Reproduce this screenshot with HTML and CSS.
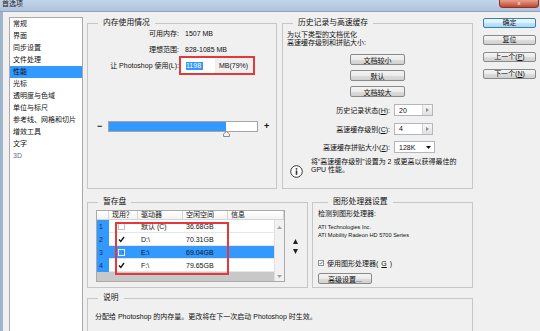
FILE: index.html
```html
<!DOCTYPE html>
<html lang="zh-CN">
<head>
    <meta charset="UTF-8">
    <meta name="viewport" content="width=device-width, initial-scale=1.0">
    <title>首选项</title>
    <link rel="stylesheet" href="styles.css">
</head>
<body>
    <div class="titlebar">
        <span class="title">首选项</span>
        <span class="close">x</span>
    </div>
    <div class="dialog">
        <ul class="nav">
            <li>常规</li>
            <li>界面</li>
            <li>同步设置</li>
            <li>文件处理</li>
            <li class="sel">性能</li>
            <li>光标</li>
            <li>透明度与色域</li>
            <li>单位与标尺</li>
            <li>参考线、网格和切片</li>
            <li>增效工具</li>
            <li>文字</li>
            <li class="dim">3D</li>
        </ul>

        <main class="panes">
            <div class="row row1">
                <fieldset class="grp mem">
                    <legend>内存使用情况</legend>
                    <div class="kv">
                        <span class="k">可用内存:</span><span class="v">1507 MB</span>
                        <span class="k">理想范围:</span><span class="v">828-1085 MB</span>
                        <span class="k">让 Photoshop 使用(L):</span>
                        <span class="mark">
                            <span class="field"><span class="hl">1198</span></span>
                            <span>MB(79%)</span>
                        </span>
                    </div>
                    <div class="slider">
                        <span class="pm">−</span>
                        <div class="bar">
                            <div class="fill" style="width:79%"></div>
                            <svg class="thumb" width="7" height="6" viewBox="0 0 7 6"><polygon points="3.5,0.5 6.5,3 6.5,5.5 0.5,5.5 0.5,3" fill="#f2f2f2" stroke="#8c8c8c"/></svg>
                        </div>
                        <span class="pm">+</span>
                    </div>
                </fieldset>

                <fieldset class="grp hist">
                    <legend>历史记录与高速缓存</legend>
                    <p class="note">为以下类型的文档优化<br>高速缓存级别和拼贴大小:</p>
                    <div class="presets">
                        <button>文档较小</button>
                        <button>默认</button>
                        <button>文档较大</button>
                    </div>
                    <div class="opts">
                        <span class="k">历史记录状态(<u>H</u>):</span>
                        <span class="spin"><span class="num">20</span><span class="arr"><svg width="3" height="4" viewBox="0 0 3 4"><polygon points="0,0 3,2 0,4" fill="#8a8a8a"/></svg></span></span>
                        <span class="k">高速缓存级别(<u>C</u>):</span>
                        <span class="spin"><span class="num">4</span><span class="arr"><svg width="3" height="4" viewBox="0 0 3 4"><polygon points="0,0 3,2 0,4" fill="#8a8a8a"/></svg></span></span>
                        <span class="k">高速缓存拼贴大小(<u>Z</u>):</span>
                        <span class="drop"><span>128K</span><svg width="5" height="3" viewBox="0 0 5 3"><polygon points="0,0 5,0 2.5,3" fill="#111"/></svg></span>
                    </div>
                    <div class="info">
                        <svg class="ico" width="13" height="13" viewBox="0 0 13 13">
                            <circle cx="6.5" cy="6.5" r="5.8" fill="#fff" stroke="#333" stroke-width="1"/>
                            <circle cx="6.5" cy="3.8" r="0.9" fill="#333"/>
                            <rect x="5.7" y="5.4" width="1.6" height="4.4" fill="#333"/>
                        </svg>
                        <p>将“高速缓存级别”设置为 2 或更高以获得最佳的<br>GPU 性能。</p>
                    </div>
                </fieldset>
            </div>

            <div class="row row2">
                <fieldset class="grp scratch">
                    <legend>暂存盘</legend>
                    <div class="disks">
                        <div class="disk">
                            <div class="cols thead">
                                <span></span><span>现用？</span><span>驱动器</span><span>空闲空间</span><span>信息</span>
                            </div>
                            <div class="tbody">
                                <div class="rows">
                                    <div class="cols tr">
                                        <span class="idx">1</span>
                                        <span class="chk"><span class="box"></span></span>
                                        <span>默认 (C)</span><span>36.68GB</span><span></span>
                                    </div>
                                    <div class="cols tr">
                                        <span class="idx">2</span>
                                        <span class="chk"><svg width="7" height="7" viewBox="0 0 7 7"><polyline points="1,3.5 2.8,5.5 6,1" fill="none" stroke="#111" stroke-width="1.3"/></svg></span>
                                        <span>D:\</span><span>70.31GB</span><span></span>
                                    </div>
                                    <div class="cols tr sel">
                                        <span class="idx">3</span>
                                        <span class="chk"><span class="box on"><svg width="5" height="5" viewBox="0 0 7 7"><polyline points="1,3.5 2.8,5.5 6,1" fill="none" stroke="#111" stroke-width="1.4"/></svg></span></span>
                                        <span>E:\</span><span>69.04GB</span><span></span>
                                    </div>
                                    <div class="cols tr">
                                        <span class="idx">4</span>
                                        <span class="chk"><svg width="7" height="7" viewBox="0 0 7 7"><polyline points="1,3.5 2.8,5.5 6,1" fill="none" stroke="#111" stroke-width="1.3"/></svg></span>
                                        <span>F:\</span><span>79.65GB</span><span></span>
                                    </div>
                                </div>
                                <div class="vscroll">
                                    <svg width="5" height="3" viewBox="0 0 5 3"><polygon points="0,3 5,3 2.5,0" fill="#a0a0a0"/></svg>
                                    <svg width="5" height="3" viewBox="0 0 5 3"><polygon points="0,0 5,0 2.5,3" fill="#a0a0a0"/></svg>
                                </div>
                            </div>
                            <div class="redmark"></div>
                        </div>
                        <div class="order">
                            <svg width="5" height="5" viewBox="0 0 5 5"><polygon points="0,5 5,5 2.5,0" fill="#222"/></svg>
                            <svg width="5" height="5" viewBox="0 0 5 5"><polygon points="0,0 5,0 2.5,5" fill="#222"/></svg>
                        </div>
                    </div>
                </fieldset>

                <fieldset class="grp gpu">
                    <legend>图形处理器设置</legend>
                    <p class="detect">检测到图形处理器:</p>
                    <p class="card">ATI Technologies Inc.<br>ATI Mobility Radeon HD 5700 Series</p>
                    <label class="use">
                        <span class="tick"><svg width="6" height="6" viewBox="0 0 6 6"><polyline points="1,3 2.4,4.6 5,1" fill="none" stroke="#2a5bd7" stroke-width="1.2"/></svg></span>
                        使用图形处理器(<u>G</u>)
                    </label>
                    <button class="adv">高级设置...</button>
                </fieldset>
            </div>

            <fieldset class="grp desc">
                <legend>说明</legend>
                <p>分配给 Photoshop 的内存量。更改将在下一次启动 Photoshop 时生效。</p>
            </fieldset>
        </main>

        <div class="actions">
            <button class="ok">确定</button>
            <button>复位</button>
            <button>上一个(<u>P</u>)</button>
            <button>下一个(<u>N</u>)</button>
        </div>
    </div>
</body>
</html>
```

FILE: styles.css
```css
*{
    box-sizing: border-box;
    margin: 0;
    padding: 0;
}
body{
    width: 540px;
    height: 331px;
    overflow: hidden;
    background-color: #f0f0f0;
    font-family: "Liberation Sans", "Noto Sans CJK SC", sans-serif;
    font-size: 7px;
    color: #111;
}
button{
    display: block;
    font: inherit;
    color: #111;
    border: 1px solid #8a8a8a;
    border-radius: 2px;
    background: linear-gradient(#f4f4f4, #ebebeb 50%, #dddddd 51%, #d0d0d0);
}

/* title bar */
.titlebar{
    height: 12px;
    display: flex;
    justify-content: space-between;
    align-items: flex-start;
    background: linear-gradient(#c4d6eb, #adc3dc);
    border-bottom: 1px solid #8fa4bd;
}
.title{
    line-height: 8px;
    padding-left: 2px;
    font-size: 7px;
    color: #222;
}
.close{
    width: 40px;
    height: 8px;
    margin-right: 1px;
    border: 1px solid #8a3325;
    border-top: none;
    border-radius: 0 0 4px 4px;
    background: linear-gradient(#e6a08d, #c5462f);
    color: #fff;
    font-size: 6px;
    line-height: 7px;
    text-align: center;
}

.dialog{
    display: flex;
    align-items: flex-start;
    height: 319px;
    overflow: hidden;
    padding: 5px 0 0 6px;
    border-left: 3px solid #9fb3cb;
}

/* left list */
.nav{
    list-style: none;
    flex-shrink: 0;
    width: 74px;
    height: 330px;
    background-color: #fff;
    border: 1px solid #a9a9a9;
}
.nav li{
    height: 12px;
    line-height: 12px;
    padding-left: 3px;
    white-space: nowrap;
}
.nav li.sel{
    background-color: #3399ff;
}
.nav li.dim{
    color: #5d6c8c;
}

/* panes */
.panes{
    width: 386px;
    flex-shrink: 0;
    margin: 1px 0 0 4px;
    display: flex;
    flex-direction: column;
}
.row{
    display: flex;
    justify-content: space-between;
    flex-shrink: 0;
}
.row1{
    height: 171px;
}
.row2{
    height: 91px;
    margin-top: 8px;
}
.grp{
    border: 1px solid #c6c6c6;
    min-width: 0;
    flex-shrink: 0;
}
.grp legend{
    font-size: 7.8px;
    line-height: 10px;
    padding: 0 5px;
    margin-left: 10px;
}
.k{
    text-align: right;
    white-space: nowrap;
}

/* memory */
.mem{
    width: 190px;
}
.kv{
    display: grid;
    grid-template-columns: 91px auto;
    grid-auto-rows: 11px;
    column-gap: 4px;
    row-gap: 5px;
    align-items: center;
    line-height: 11px;
}
.v{
    padding-left: 2px;
}
.mark{
    display: flex;
    align-items: center;
    gap: 4px;
    width: 76px;
    height: 19px;
    margin: -4px 0 -4px -4px;
    border: 2px solid #e5383b;
}
.field{
    display: flex;
    align-items: center;
    width: 34px;
    height: 15px;
    padding-left: 5px;
    background-color: #fff;
}
.hl{
    background-color: #3399ff;
    color: #fff;
    line-height: 8px;
    padding-right: 2px;
}
.slider{
    display: flex;
    align-items: center;
    gap: 6px;
    height: 11px;
    margin-top: 50px;
    padding-left: 9px;
}
.pm{
    width: 5px;
    font-size: 9px;
    font-weight: bold;
    line-height: 11px;
    text-align: center;
}
.bar{
    position: relative;
    width: 150px;
    height: 11px;
    border: 1px solid #a4a4a4;
    background-color: #fff;
}
.fill{
    height: 100%;
    background-color: #3399ff;
}
.thumb{
    position: absolute;
    left: 79%;
    top: 100%;
    margin-left: -3px;
}

/* history */
.hist{
    width: 191px;
}
.note{
    line-height: 8px;
    margin: 3px 0 0 4px;
}
.presets{
    display: flex;
    flex-direction: column;
    align-items: center;
    gap: 5px;
    margin-top: 7px;
}
.presets button{
    width: 55px;
    height: 11px;
}
.opts{
    display: grid;
    grid-template-columns: 107px auto;
    grid-auto-rows: 12px;
    column-gap: 4px;
    row-gap: 6.5px;
    align-items: center;
    margin-top: 7px;
}
.spin, .drop{
    display: flex;
    align-items: center;
    height: 12px;
    background-color: #fff;
    border: 1px solid #b4b6bc;
}
.spin{
    width: 39px;
}
.num{
    flex: 1;
    padding-left: 4px;
}
.arr{
    display: flex;
    align-items: center;
    justify-content: center;
    width: 10px;
    height: 100%;
    background: linear-gradient(#f6f6f6, #e1e1e1);
    border-left: 1px solid #d4d4d4;
}
.drop{
    width: 41px;
    justify-content: space-between;
    padding: 0 3px 0 4px;
}
.info{
    display: flex;
    align-items: flex-start;
    gap: 8px;
    margin: 5px 0 0 7px;
}
.ico{
    margin-top: 7px;
    flex-shrink: 0;
}
.info p{
    line-height: 8px;
    white-space: nowrap;
}

/* scratch disks */
.scratch{
    width: 221px;
}
.disks{
    display: flex;
    align-items: center;
    gap: 8px;
    margin: 3px 0 0 8px;
}
.disk{
    position: relative;
    width: 189px;
    height: 72px;
    display: flex;
    flex-direction: column;
    border: 1px solid #a9a9a9;
    background-color: #c8c8c8;
}
.cols{
    display: grid;
    grid-template-columns: 12px 29px 45px 45px 1fr;
}
.thead{
    height: 9px;
    line-height: 8px;
    background: linear-gradient(#ffffff, #f3f3f3);
    border-bottom: 1px solid #d5d5d5;
}
.thead span{
    padding-left: 3px;
    border-right: 1px solid #d5d5d5;
    white-space: nowrap;
}
.tbody{
    display: flex;
    flex: 1;
}
.rows{
    flex: 1;
}
.tr{
    height: 13px;
    line-height: 13px;
    background-color: #fff;
    border-bottom: 1px solid #e6e6e6;
}
.tr span{
    padding-left: 3px;
    white-space: nowrap;
}
.tr.sel{
    background-color: #3399ff;
}
.tr .idx{
    padding-left: 2px;
    background-color: #3399ff;
    color: #0d2c6c;
}
.tr .chk{
    display: flex;
    align-items: center;
    padding-left: 9px;
}
.box{
    display: flex;
    align-items: center;
    justify-content: center;
    width: 7px;
    height: 7px;
    border: 1px solid #c4c4c4;
    background-color: #fff;
}
.box.on{
    border-color: #e8f1fb;
    background-color: #3399ff;
}
.vscroll{
    width: 10px;
    display: flex;
    flex-direction: column;
    justify-content: space-between;
    align-items: center;
    padding: 6px 0 3px;
    background-color: #f1f1f1;
    border-left: 1px solid #e0e0e0;
}
.redmark{
    position: absolute;
    left: 18px;
    top: 11px;
    width: 114px;
    height: 53px;
    border: 2px solid #e5383b;
}
.order{
    display: flex;
    flex-direction: column;
    gap: 5px;
}

/* gpu */
.gpu{
    width: 161px;
    padding-left: 5px;
}
.detect{
    line-height: 8px;
    margin-top: 3px;
}
.card{
    font-size: 5.6px;
    line-height: 8px;
    margin-top: 5px;
    white-space: nowrap;
}
.use{
    display: flex;
    align-items: center;
    gap: 3px;
    height: 8px;
    margin-top: 20px;
}
.tick{
    display: flex;
    width: 6px;
    height: 6px;
    border: 1px solid #8e8f8f;
    background-color: #fff;
    align-items: center;
    justify-content: center;
}
.adv{
    width: 54px;
    height: 11px;
    margin-top: 6px;
}

/* description */
.desc{
    height: 60px;
    margin-top: 5px;
}
.desc p{
    line-height: 8px;
    margin: 10px 0 0 7px;
    white-space: nowrap;
}

/* right buttons */
.actions{
    display: flex;
    flex-direction: column;
    gap: 7px;
    width: 53px;
    flex-shrink: 0;
    margin: 1px 0 0 10px;
}
.actions button{
    height: 10px;
    line-height: 8px;
}
.actions .ok{
    border-color: #3c7fb1;
    background: linear-gradient(#ecf7fd, #dbf0fc 50%, #c0e6fc 51%, #a9d9f4);
}
```
